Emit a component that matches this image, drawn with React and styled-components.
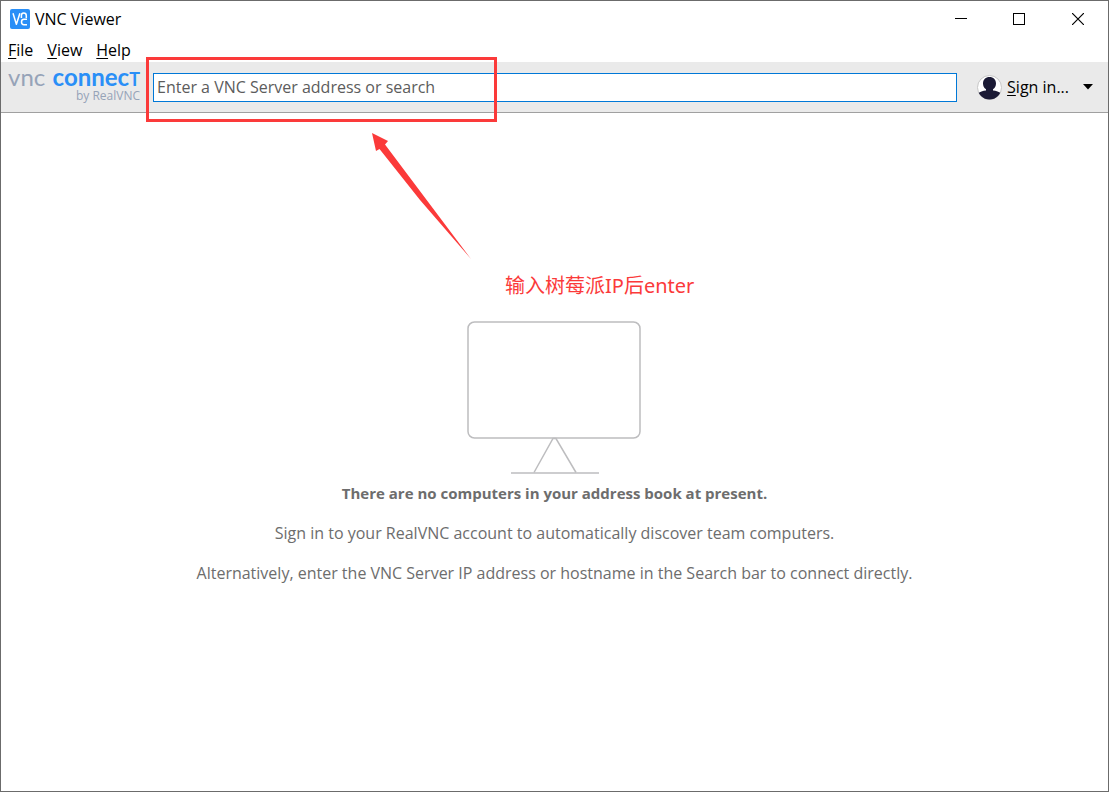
import React from "react";
import styled, { createGlobalStyle } from "styled-components";

const GlobalStyle = createGlobalStyle`
  *, *::before, *::after { box-sizing: border-box; }
  body { margin: 0; background: #fff; }
  body, button, input {
    font-family: "Open Sans", "Noto Sans CJK SC", sans-serif;
    font-size: 16px;
    line-height: 20px;
    color: #000;
  }
`;

const Window = styled.div`
  position: relative;
  display: flex;
  flex-direction: column;
  min-height: 100vh;
  background: #fff;
  border: 1px solid #6b6b6b;
`;

const TitleBar = styled.header`
  display: flex;
  align-items: center;
  height: 36px;
  padding-left: 9px;
`;

const Title = styled.h1`
  flex: 1;
  margin: 0 0 0 5px;
  font-size: 16px;
  font-weight: 400;
`;

const PlainButton = styled.button`
  display: flex;
  align-items: center;
  padding: 0;
  background: none;
  border: 0;
`;

const CaptionButton = styled(PlainButton)`
  justify-content: center;
  width: ${(p) => (p.$last ? 60 : 58)}px;
  height: 36px;
`;

const MenuBar = styled.nav`
  display: flex;
  gap: 14px;
  height: 25px;
  padding: 3px 7px 0;
`;

const MenuButton = styled(PlainButton)`
  height: 20px;
`;

const Key = styled.span`
  text-decoration: underline;
  text-underline-offset: 2px;
`;

const Toolbar = styled.div`
  display: flex;
  align-items: center;
  height: 51px;
  padding: 0 15px 0 7px;
  background: #eaeaea;
  border-bottom: 1px solid #a0a0a0;
`;

const Brand = styled.div`
  width: 132px;
  margin-right: 13px;
  text-align: right;
  color: #96a3b8;
`;

const Wordmark = styled.div`
  display: flex;
  align-items: baseline;
  justify-content: space-between;
  height: 18px;
  font-family: Lato, sans-serif;
  font-size: 24px;
  line-height: 16px;
`;

const WordmarkName = styled.span`
  font-weight: 700;
  color: #2a8ff7;
`;

const SmallCap = styled.span`
  font-size: 18px;
  text-transform: uppercase;
`;

const Byline = styled.div`
  font-size: 12px;
  line-height: 18px;
`;

const AddressField = styled.div`
  flex: 1;
  display: flex;
  min-width: 0;
  height: 29px;
  background: #fff;
  border: 1px solid #0078d7;
`;

const AddressInput = styled.input`
  flex: 1;
  min-width: 0;
  padding: 0 3px 1px;
  background: none;
  border: 0;
  outline: 0;

  &::placeholder { color: #5c5c5c; opacity: 1; }
`;

const SignIn = styled(PlainButton)`
  gap: 5px;
  margin-left: 20px;
`;

const SignInLabel = styled.span`
  margin-right: 9px;
`;

const Main = styled.main`
  flex: 1;
  display: flex;
  flex-direction: column;
  align-items: center;
  justify-content: center;
  gap: 20px;
  text-align: center;
  color: #6d6d6d;
`;

const EmptyState = styled.div`
  display: flex;
  flex-direction: column;
  align-items: center;
  gap: 9px;
`;

const Message = styled.p`
  margin: 0;
  font-size: ${(p) => (p.$strong ? 15 : 16)}px;
  font-weight: ${(p) => (p.$strong ? 700 : 400)};
`;

const Highlight = styled.div`
  position: absolute;
  top: 56px;
  left: 145px;
  width: 351px;
  height: 65px;
  border: 3px solid #fb3a3a;
  pointer-events: none;
`;

const Arrow = styled.svg`
  position: absolute;
  top: 131px;
  left: 370px;
  pointer-events: none;
`;

const Note = styled.p`
  position: absolute;
  top: 271px;
  left: 504px;
  margin: 0;
  font-family: "Noto Sans", "Noto Sans CJK SC", sans-serif;
  font-size: 20px;
  line-height: 28px;
  white-space: nowrap;
  color: #fb3a3a;
`;

function AppIcon() {
  return (
    <svg width="20" height="20" viewBox="0 0 20 20" aria-hidden="true">
      <rect width="20" height="20" rx="2" fill="#2a8ff7" />
      <g fill="none" stroke="#fff" strokeWidth="1.5" strokeLinejoin="round">
        <path d="M3 4.2 6.4 15.3 9.9 4.2" />
        <path d="M11.4 9V6.6Q11.4 4.1 13.8 4.1T16.3 6.6V9" />
        <path d="M17 10.3H14Q11.5 10.3 11.5 13T14 15.7H17" />
      </g>
    </svg>
  );
}

function Avatar() {
  return (
    <svg width="25" height="25" viewBox="0 0 25 25" aria-hidden="true">
      <defs>
        <clipPath id="avatar-disc">
          <circle cx="12.5" cy="12.5" r="12" />
        </clipPath>
      </defs>
      <circle cx="12.5" cy="12.5" r="12" fill="#fff" stroke="#c6c6c6" />
      <g fill="#1b1a35" clipPath="url(#avatar-disc)">
        <path d="M12.5 2C8.700 2 6 4.700 6 8.400C6 11 7.200 12.900 9 14.200V17H16V14.200C17.800 12.900 19 11 19 8.400C19 4.700 16.300 2 12.500 2Z" />
        <path d="M0 25V19C3 16.800 6 15.800 9 15.600H16C19 15.800 22 16.800 25 19V25Z" />
      </g>
    </svg>
  );
}

function Monitor() {
  return (
    <svg width="174" height="153" viewBox="0 0 174 153" aria-hidden="true">
      <g fill="none" stroke="#bdbdbf" strokeWidth="1.5">
        <rect x="1" y="1" width="172" height="116" rx="6.500" />
        <path d="M44 152H132" />
        <path d="M67 151.500 86 117.500H89L109 151.500" />
      </g>
    </svg>
  );
}

const menus = ["File", "View", "Help"];

export default function App() {
  return (
    <Window>
      <GlobalStyle />
      <TitleBar>
        <AppIcon />
        <Title>VNC Viewer</Title>
        <CaptionButton aria-label="Minimize">
          <svg width="12" height="12" aria-hidden="true">
            <path d="M0 5.500H12" stroke="#000" />
          </svg>
        </CaptionButton>
        <CaptionButton aria-label="Maximize">
          <svg width="12" height="12" aria-hidden="true">
            <rect x=".5" y=".5" width="11" height="11" fill="none" stroke="#000" />
          </svg>
        </CaptionButton>
        <CaptionButton aria-label="Close" $last>
          <svg width="12" height="12" aria-hidden="true">
            <path d="M0 0 12 12M12 0 0 12" stroke="#000" strokeWidth="1.200" />
          </svg>
        </CaptionButton>
      </TitleBar>

      <MenuBar>
        {menus.map((name) => (
          <MenuButton key={name}>
            <span><Key>{name[0]}</Key>{name.slice(1)}</span>
          </MenuButton>
        ))}
      </MenuBar>

      <Toolbar>
        <Brand>
          <Wordmark>
            <span>vnc</span>
            <WordmarkName>connec<SmallCap>t</SmallCap></WordmarkName>
          </Wordmark>
          <Byline>by RealVNC</Byline>
        </Brand>
        <AddressField>
          <AddressInput
            type="text"
            aria-label="VNC Server address or search"
            placeholder="Enter a VNC Server address or search"
          />
        </AddressField>
        <SignIn>
          <Avatar />
          <SignInLabel><Key>S</Key>ign in...</SignInLabel>
          <svg width="10" height="6" aria-hidden="true">
            <path d="M0 0H10L5 5.500Z" />
          </svg>
        </SignIn>
      </Toolbar>

      <Main>
        <EmptyState>
          <Monitor />
          <Message $strong>There are no computers in your address book at present.</Message>
        </EmptyState>
        <Message>Sign in to your RealVNC account to automatically discover team computers.</Message>
        <Message>
          Alternatively, enter the VNC Server IP address or hostname in the Search bar to connect directly.
        </Message>
      </Main>

      <Highlight />
      <Arrow width="101" height="129" viewBox="0 0 101 129" aria-hidden="true">
        <path d="M1 1 17 9 14 12.500 100 127 49 68 8.500 17 5 19Z" fill="#fb3a3a" />
      </Arrow>
      <Note>输入树莓派IP后enter</Note>
    </Window>
  );
}
